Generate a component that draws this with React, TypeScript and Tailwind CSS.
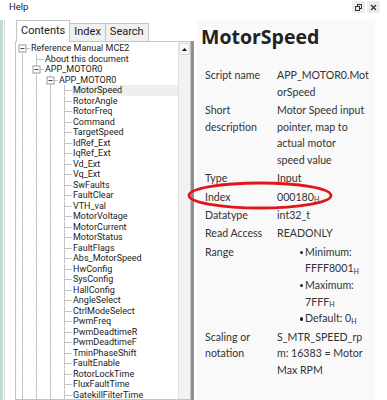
import React from 'react';

// Tree node in the contents pane
interface Node {
  depth: number;
  label: string;
  box?: boolean;
  first?: boolean;
  selected?: boolean;
}

const leaves = [
  'MotorSpeed', 'RotorAngle', 'RotorFreq', 'Command', 'TargetSpeed', 'IdRef_Ext', 'IqRef_Ext',
  'Vd_Ext', 'Vq_Ext', 'SwFaults', 'FaultClear', 'VTH_val', 'MotorVoltage', 'MotorCurrent',
  'MotorStatus', 'FaultFlags', 'Abs_MotorSpeed', 'HwConfig', 'SysConfig', 'HallConfig',
  'AngleSelect', 'CtrlModeSelect', 'PwmFreq', 'PwmDeadtimeR', 'PwmDeadtimeF', 'TminPhaseShift',
  'FaultEnable', 'RotorLockTime', 'FluxFaultTime', 'GatekillFilterTime',
];

const nodes: Node[] = [
  { depth: 0, label: 'Reference Manual MCE2', box: true, first: true },
  { depth: 1, label: 'About this document' },
  { depth: 1, label: 'APP_MOTOR0', box: true },
  { depth: 2, label: 'APP_MOTOR0', box: true },
  ...leaves.map((l, i) => ({ depth: 3, label: l, selected: i === 0 })),
];

function Guide() {
  return (
    <svg width="14" height="10.5" className="shrink-0 block">
      <line x1="6.5" y1="0" x2="6.5" y2="10.5" stroke="#c4c4c4" strokeWidth="1" />
    </svg>
  );
}

function Connector({ box, first }: { box?: boolean; first?: boolean }) {
  return (
    <svg width="14" height="10.5" className="shrink-0 block">
      <line x1="6.5" y1={first ? 5 : 0} x2="6.5" y2="10.5" stroke="#c4c4c4" strokeWidth="1" />
      <line x1="6.5" y1="5.5" x2="14" y2="5.5" stroke="#c4c4c4" strokeWidth="1" />
      {box && (
        <>
          <rect x="3" y="2" width="7" height="7" fill="#fff" stroke="#9a9a9a" strokeWidth="1" />
          <line x1="4.5" y1="5.5" x2="8.5" y2="5.5" stroke="#444" strokeWidth="1" />
        </>
      )}
    </svg>
  );
}

function TreeRow({ node }: { node: Node }) {
  return (
    <div className="flex h-[10.5px]">
      {Array.from({ length: node.depth }).map((_, i) => (
        <Guide key={i} />
      ))}
      <Connector box={node.box} first={node.first} />
      <div
        className={`pl-[1px] leading-[10.5px] whitespace-nowrap ${node.selected ? 'flex-1 bg-[#eeeeee]' : ''}`}
      >
        {node.label}
      </div>
    </div>
  );
}

function Sub() {
  return <sub className="text-[7px]">H</sub>;
}

function PropRow({ label, children }: { label: React.ReactNode; children: React.ReactNode }) {
  return (
    <div className="flex py-[0.8px]">
      <div className="w-[72px] shrink-0">{label}</div>
      <div className="flex-1">{children}</div>
    </div>
  );
}

function Bullet({ children }: { children: React.ReactNode }) {
  return (
    <div className="flex">
      <div className="w-[28px] shrink-0 flex justify-end pr-[2px] pt-[7px]">
        <div className="w-[3.5px] h-[3.5px] rounded-full bg-[#222]" />
      </div>
      <div>{children}</div>
    </div>
  );
}

export default function App() {
  return (
    <div className="relative w-[387px] h-[400px] overflow-hidden bg-white font-['Roboto',sans-serif] text-[#1b1b1b]">
      {/* Title bar */}
      <div className="h-[20px] flex items-start justify-between">
        <span className="ml-[9px] mt-[1px] text-[9.5px] leading-[12px]">Help</span>
        <div className="flex gap-[2px] mr-[7px] mt-[1px]">
          <div className="w-[13px] h-[12px] bg-[#ececec] flex items-center justify-center">
            <svg width="7" height="7" viewBox="0 0 7 7">
              <rect x="2.5" y="0.5" width="4" height="4" fill="none" stroke="#333" />
              <rect x="0.5" y="2.5" width="4" height="4" fill="#ececec" stroke="#333" />
            </svg>
          </div>
          <div className="w-[13px] h-[12px] bg-[#ececec] flex items-center justify-center">
            <svg width="7" height="7" viewBox="0 0 7 7">
              <path d="M1 1 L6 6 M6 1 L1 6" stroke="#333" strokeWidth="1.3" />
            </svg>
          </div>
        </div>
      </div>

      <div className="flex h-[380px]">
        <div className="w-[3px] bg-[#bfdccf]" />
        <div className="ml-[1px] w-px bg-[#d6d6d6]" />

        {/* Contents dock */}
        <div className="ml-[10px] w-[176px] flex flex-col">
          <div className="h-[21px] flex items-end pl-[1px] text-[11px]">
            <div className="relative z-10 -mb-px h-[22px] px-[4px] flex items-center bg-white border border-b-0 border-[#c4c4c4]">
              Contents
            </div>
            <div className="h-[18px] px-[4px] flex items-center bg-[#f0f0f0] border border-l-0 border-b-0 border-[#c4c4c4]">
              Index
            </div>
            <div className="h-[18px] px-[4px] flex items-center bg-[#f0f0f0] border border-l-0 border-b-0 border-[#c4c4c4]">
              Search
            </div>
          </div>
          <div className="flex-1 flex border border-[#c4c4c4] overflow-hidden">
            <div className="flex-1 pt-[1px] text-[9px] overflow-hidden">
              {nodes.map((n, i) => (
                <TreeRow key={i} node={n} />
              ))}
            </div>
            <div className="w-[12px] bg-[#f2f2f2] border-l border-[#e2e2e2]">
              <div className="h-[12px] mt-[1px] flex items-center justify-center bg-[#f7f7f7] border border-[#dcdcdc]">
                <svg width="5" height="3" viewBox="0 0 5 3">
                  <path d="M0 3 L2.5 0 L5 3 Z" fill="#111" />
                </svg>
              </div>
            </div>
          </div>
        </div>

        {/* Splitter */}
        <div className="w-[3px] mt-[21px] bg-[#8f8f8f]" />
        <div className="w-[3px]" />

        {/* Topic pane */}
        <div className="w-[178px] bg-[#f9f9f9] text-[#333] font-['Lato',sans-serif] text-[10.6px] leading-[16.7px]">
          <h1 className="mt-[2.5px] pl-[4px] font-['Open_Sans',sans-serif] font-bold text-[19.5px] leading-[28px] text-[#222]">
            MotorSpeed
          </h1>
          <div className="mt-[15.7px] pl-[8px]">
            <PropRow label="Script name">
              <div>APP_MOTOR0.Mot</div>
              <div>orSpeed</div>
            </PropRow>
            <PropRow label={<><div>Short</div><div>description</div></>}>
              <div>Motor Speed input</div>
              <div>pointer, map to</div>
              <div>actual motor</div>
              <div>speed value</div>
            </PropRow>
            <PropRow label="Type">Input</PropRow>
            <PropRow label="Index">
              000180<Sub />
            </PropRow>
            <PropRow label="Datatype">int32_t</PropRow>
            <PropRow label="Read Access">READONLY</PropRow>
            <PropRow label="Range">
              <Bullet>
                <div>Minimum:</div>
                <div>FFFF8001<Sub /></div>
              </Bullet>
              <Bullet>
                <div>Maximum:</div>
                <div>7FFF<Sub /></div>
              </Bullet>
              <Bullet>
                <div>Default: 0<Sub /></div>
              </Bullet>
            </PropRow>
            <PropRow label={<><div>Scaling or</div><div>notation</div></>}>
              <div>S_MTR_SPEED_rp</div>
              <div>m: 16383 = Motor</div>
              <div>Max RPM</div>
            </PropRow>
          </div>
        </div>
      </div>

      {/* Red annotation ring */}
      <svg className="absolute left-0 top-0 pointer-events-none" width="387" height="400">
        <ellipse cx="260" cy="195.5" rx="71" ry="12.5" fill="none" stroke="#e1161c" strokeWidth="2.8" />
      </svg>
    </div>
  );
}
